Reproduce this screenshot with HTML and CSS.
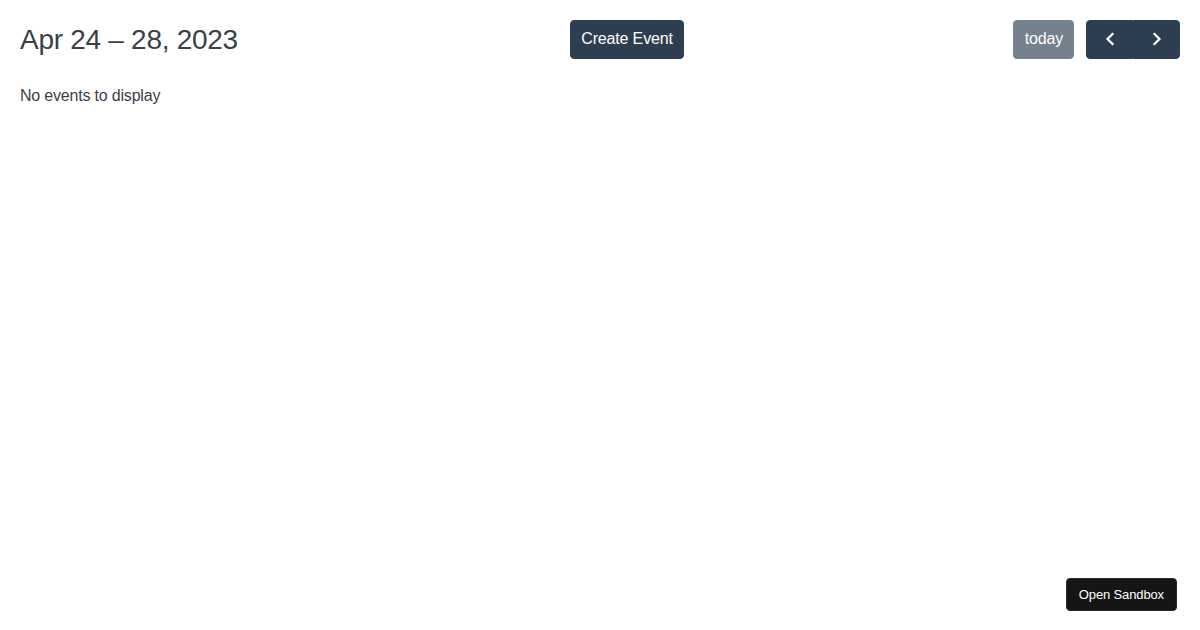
FILE: index.html
```html
<!DOCTYPE html>
<html>
<head>
<meta charset="utf-8">
<link rel="stylesheet" href="styles.css">
</head>
<body>
<div class="calendar">
  <div class="toolbar">
    <div class="chunk"><h2 class="title">Apr 24 – 28, 2023</h2></div>
    <div class="chunk"><button class="btn">Create Event</button></div>
    <div class="chunk right">
      <button class="btn today">today</button>
      <div class="group">
        <button class="btn icon-btn" aria-label="prev"><svg width="24" height="24" viewBox="0 0 24 24"><path d="M14.5 7 L9.5 12 L14.5 17" fill="none" stroke="#fff" stroke-width="2.2" stroke-linecap="square"/></svg></button>
        <button class="btn icon-btn" aria-label="next"><svg width="24" height="24" viewBox="0 0 24 24"><path d="M9.5 7 L14.5 12 L9.5 17" fill="none" stroke="#fff" stroke-width="2.2" stroke-linecap="square"/></svg></button>
      </div>
    </div>
  </div>
  <div class="empty">No events to display</div>
</div>
<button class="sandbox">Open Sandbox</button>
</body>
</html>
```
FILE: styles.css
```css
html, body {
  margin: 0;
  padding: 0;
  background: #fff;
}
body {
  font-family: "Liberation Sans", Arial, sans-serif;
  font-size: 16px;
  color: #3a3f4b;
  height: 630px;
  letter-spacing: -0.012em;
}
.calendar {
  padding: 20px;
}
.toolbar {
  display: flex;
  justify-content: space-between;
  align-items: center;
  margin-bottom: 24px;
}
.chunk {
  display: flex;
  align-items: center;
}
.chunk.right {
  width: 166px;
  justify-content: flex-end;
}
.chunk:first-child {
  width: 220px;
}
.title {
  margin: 0;
  font-size: 28px;
  font-weight: 400;
  line-height: 1.2;
  white-space: nowrap;
  letter-spacing: -0.01em;
}
.btn {
  font-family: "Liberation Sans", Arial, sans-serif;
  font-size: 16px;
  letter-spacing: -0.01em;
  line-height: 24px;
  padding: 6.4px 10.4px;
  border: 1px solid #2c3e50;
  background: #2c3e50;
  color: #fff;
  border-radius: 4px;
  display: inline-flex;
  align-items: center;
  justify-content: center;
}
.today {
  opacity: 0.65;
  margin-right: 12px;
}
.group {
  display: flex;
}
.group .icon-btn {
  padding: 6.4px 10.4px;
  height: 38.8px;
}
.group .icon-btn:first-child {
  border-radius: 4px 0 0 4px;
}
.group .icon-btn:last-child {
  border-radius: 0 4px 4px 0;
}
.icon-btn svg {
  display: block;
}
.empty {
  line-height: 26px;
}
.sandbox {
  position: fixed;
  right: 23px;
  bottom: 19px;
  background: #151515;
  color: #fff;
  border: 1px solid #2a2a2a;
  border-radius: 4px;
  font-family: "Liberation Sans", Arial, sans-serif;
  font-size: 13px;
  letter-spacing: -0.01em;
  padding: 0 12px;
  height: 33px;
  line-height: 31px;
}
```
